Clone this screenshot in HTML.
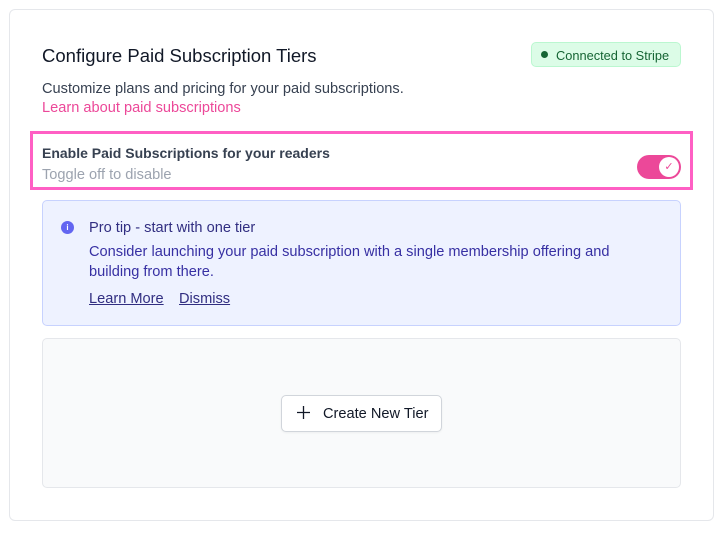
<!DOCTYPE html>
<html><head><style>
*{box-sizing:border-box;margin:0;padding:0}
body{width:723px;height:537px;background:#fff;font-family:"Liberation Sans",sans-serif;position:relative;overflow:hidden}
.card{position:absolute;left:9px;top:9px;width:705px;height:512px;border:1px solid #e5e7eb;border-radius:6px}
.a{position:absolute;white-space:nowrap}
</style></head><body>
<div class="card"></div>
<div class="a" style="left:42px;top:45px;font-size:18.5px;color:#111827">Configure Paid Subscription Tiers</div>
<div class="a" style="left:531px;top:42px;width:150px;height:25px;background:#dcfce7;border:1px solid #bbf7d0;border-radius:5px;font-size:12.8px;color:#166534;padding:5px 0 0 24px">Connected to Stripe</div>
<div class="a" style="left:541px;top:51px;width:7px;height:7px;border-radius:50%;background:#166534"></div>
<div class="a" style="left:42px;top:81px;font-size:14.6px;color:#374151">Customize plans and pricing for your paid subscriptions.</div>
<div class="a" style="left:42px;top:100px;font-size:14.6px;color:#ec4899">Learn about paid subscriptions</div>
<div class="a" style="left:30px;top:131px;width:663px;height:59px;border:3px solid #ff5fc4"></div>
<div class="a" style="left:42px;top:145px;font-size:14px;color:#374151;font-weight:bold">Enable Paid Subscriptions for your readers</div>
<div class="a" style="left:42px;top:167px;font-size:14.6px;color:#9ca3af">Toggle off to disable</div>
<div class="a" style="left:637px;top:155px;width:44px;height:24px;border-radius:12px;background:#ec4899"></div>
<div class="a" style="left:659px;top:157px;width:20px;height:20px;border-radius:50%;background:#fff;color:#ec4899;font-size:11px;text-align:center;line-height:20px">✓</div>
<div class="a" style="left:42px;top:200px;width:639px;height:126px;background:#eef2ff;border:1px solid #c7d2fe;border-radius:5px"></div>
<div class="a" style="left:61px;top:221px;width:13px;height:13px;border-radius:50%;background:#6366f1;color:#fff;font-size:8px;text-align:center;line-height:13px;font-weight:bold">i</div>
<div class="a" style="left:89px;top:220px;font-size:14.6px;color:#312e81">Pro tip - start with one tier</div>
<div class="a" style="left:89px;top:242px;font-size:14.6px;color:#3730a3;line-height:20px">Consider launching your paid subscription with a single membership offering and<br>building from there.</div>
<div class="a" style="left:89px;top:291px;font-size:14.6px;color:#312e81;text-decoration:underline">Learn More</div>
<div class="a" style="left:179px;top:291px;font-size:14.6px;color:#312e81;text-decoration:underline">Dismiss</div>
<div class="a" style="left:42px;top:338px;width:639px;height:150px;background:#f9fafb;border:1px solid #e5e7eb;border-radius:5px"></div>
<div class="a" style="left:281px;top:395px;width:161px;height:37px;background:#fff;border:1px solid #d1d5db;border-radius:5px;box-shadow:0 1px 2px rgba(0,0,0,.05);font-size:14.6px;color:#111827;padding:10px 0 0 41px">Create New Tier</div>
<svg class="a" style="left:296px;top:405px" width="15" height="15" viewBox="0 0 15 15"><path d="M7.5 1v13M1 7.5h13" stroke="#111827" stroke-width="1.3"/></svg>
</body></html>
